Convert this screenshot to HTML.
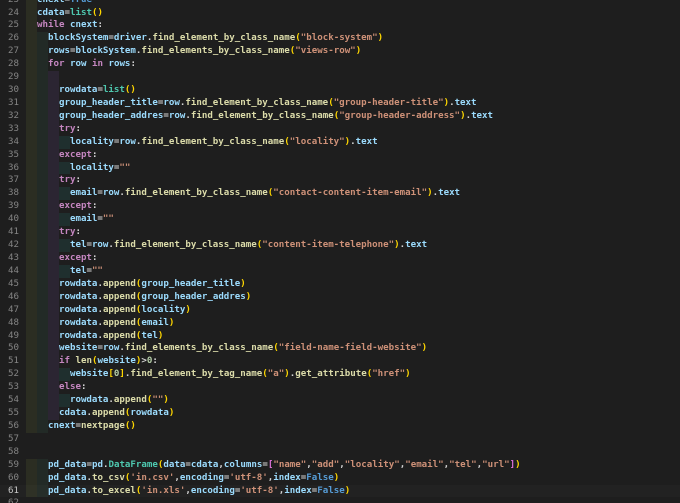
<!DOCTYPE html>
<html><head><meta charset="utf-8"><style>
html,body{margin:0;padding:0;background:#1e1e1e;width:680px;height:503px;overflow:hidden}
#ed{position:relative;width:680px;height:503px;font-family:"DejaVu Sans Mono","Liberation Mono",monospace;font-size:9.15px;font-weight:bold}
.l{position:absolute;left:0;height:12.92px;line-height:12.92px;white-space:pre;width:680px}
.n{position:absolute;left:0;width:19px;text-align:right;color:#858585;font-weight:normal}
.c{position:absolute;left:26px;color:#d4d4d4}
.v{color:#9cdcfe}.f{color:#dcdcaa}.k{color:#c586c0}.s{color:#ce9178}.p{color:#ffd700}.b{color:#da70d6}.q{color:#569cd6}.t{color:#4ec9b0}.m{color:#b5cea8}
.g{position:absolute}
</style></head><body><div id="ed">
<div id="guides"></div>
<div id="lines"></div>
<script>
var L=[
'  <span class="v">cnext</span>=<span class="q">True</span>',
'  <span class="v">cdata</span>=<span class="t">list</span><span class="p">()</span>',
'  <span class="k">while</span> <span class="v">cnext</span>:',
'    <span class="v">blockSystem</span>=<span class="v">driver</span>.<span class="f">find_element_by_class_name</span><span class="p">(</span><span class="s">"block-system"</span><span class="p">)</span>',
'    <span class="v">rows</span>=<span class="v">blockSystem</span>.<span class="f">find_elements_by_class_name</span><span class="p">(</span><span class="s">"views-row"</span><span class="p">)</span>',
'    <span class="k">for</span> <span class="v">row</span> <span class="k">in</span> <span class="v">rows</span>:',
'',
'      <span class="v">rowdata</span>=<span class="t">list</span><span class="p">()</span>',
'      <span class="v">group_header_title</span>=<span class="v">row</span>.<span class="f">find_element_by_class_name</span><span class="p">(</span><span class="s">"group-header-title"</span><span class="p">)</span>.<span class="v">text</span>',
'      <span class="v">group_header_addres</span>=<span class="v">row</span>.<span class="f">find_element_by_class_name</span><span class="p">(</span><span class="s">"group-header-address"</span><span class="p">)</span>.<span class="v">text</span>',
'      <span class="k">try</span>:',
'        <span class="v">locality</span>=<span class="v">row</span>.<span class="f">find_element_by_class_name</span><span class="p">(</span><span class="s">"locality"</span><span class="p">)</span>.<span class="v">text</span>',
'      <span class="k">except</span>:',
'        <span class="v">locality</span>=<span class="s">""</span>',
'      <span class="k">try</span>:',
'        <span class="v">email</span>=<span class="v">row</span>.<span class="f">find_element_by_class_name</span><span class="p">(</span><span class="s">"contact-content-item-email"</span><span class="p">)</span>.<span class="v">text</span>',
'      <span class="k">except</span>:',
'        <span class="v">email</span>=<span class="s">""</span>',
'      <span class="k">try</span>:',
'        <span class="v">tel</span>=<span class="v">row</span>.<span class="f">find_element_by_class_name</span><span class="p">(</span><span class="s">"content-item-telephone"</span><span class="p">)</span>.<span class="v">text</span>',
'      <span class="k">except</span>:',
'        <span class="v">tel</span>=<span class="s">""</span>',
'      <span class="v">rowdata</span>.<span class="f">append</span><span class="p">(</span><span class="v">group_header_title</span><span class="p">)</span>',
'      <span class="v">rowdata</span>.<span class="f">append</span><span class="p">(</span><span class="v">group_header_addres</span><span class="p">)</span>',
'      <span class="v">rowdata</span>.<span class="f">append</span><span class="p">(</span><span class="v">locality</span><span class="p">)</span>',
'      <span class="v">rowdata</span>.<span class="f">append</span><span class="p">(</span><span class="v">email</span><span class="p">)</span>',
'      <span class="v">rowdata</span>.<span class="f">append</span><span class="p">(</span><span class="v">tel</span><span class="p">)</span>',
'      <span class="v">website</span>=<span class="v">row</span>.<span class="f">find_elements_by_class_name</span><span class="p">(</span><span class="s">"field-name-field-website"</span><span class="p">)</span>',
'      <span class="k">if</span> <span class="f">len</span><span class="p">(</span><span class="v">website</span><span class="p">)</span>&gt;<span class="m">0</span>:',
'        <span class="v">website</span><span class="p">[</span><span class="m">0</span><span class="p">]</span>.<span class="f">find_element_by_tag_name</span><span class="p">(</span><span class="s">"a"</span><span class="p">)</span>.<span class="f">get_attribute</span><span class="p">(</span><span class="s">"href"</span><span class="p">)</span>',
'      <span class="k">else</span>:',
'        <span class="v">rowdata</span>.<span class="f">append</span><span class="p">(</span><span class="s">""</span><span class="p">)</span>',
'      <span class="v">cdata</span>.<span class="f">append</span><span class="p">(</span><span class="v">rowdata</span><span class="p">)</span>',
'    <span class="v">cnext</span>=<span class="f">nextpage</span><span class="p">()</span>',
'',
'',
'    <span class="v">pd_data</span>=<span class="v">pd</span>.<span class="t">DataFrame</span><span class="p">(</span><span class="v">data</span>=<span class="v">cdata</span>,<span class="v">columns</span>=<span class="b">[</span><span class="s">"name"</span>,<span class="s">"add"</span>,<span class="s">"locality"</span>,<span class="s">"email"</span>,<span class="s">"tel"</span>,<span class="s">"url"</span><span class="b">]</span><span class="p">)</span>',
'    <span class="v">pd_data</span>.<span class="f">to_csv</span><span class="p">(</span><span class="s">\'in.csv\'</span>,<span class="v">encoding</span>=<span class="s">\'utf-8\'</span>,<span class="v">index</span>=<span class="q">False</span><span class="p">)</span>',
'    <span class="v">pd_data</span>.<span class="f">to_excel</span><span class="p">(</span><span class="s">\'in.xls\'</span>,<span class="v">encoding</span>=<span class="s">\'utf-8\'</span>,<span class="v">index</span>=<span class="q">False</span><span class="p">)</span>',
''
];
function Y(n){return -6.4+(n-23)*12.92;}
var G=[[26,23,56,'#2b2d22'],[26,59,61,'#2b2d22'],[37,26,56,'#222a26'],[48,29,55,'#2b2532'],
[59,34,34,'#1f2f2e'],[59,36,36,'#1f2f2e'],[59,38,38,'#1f2f2e'],[59,40,40,'#1f2f2e'],[59,42,42,'#1f2f2e'],[59,44,44,'#1f2f2e'],[59,52,52,'#1f2f2e'],[59,54,54,'#1f2f2e'],
[37,59,61,'#222a26']];
var g='';
for(var j=0;j<G.length;j++){var a=G[j];var t0=Math.max(0,Y(a[1]));var t1=Y(a[2]+1);
g+='<div class="g" style="left:'+a[0]+'px;top:'+t0.toFixed(2)+'px;width:11px;height:'+(t1-t0).toFixed(2)+'px;background:'+a[3]+'"></div>';}
document.getElementById('guides').innerHTML=g;
var h='';
for(var i=0;i<L.length;i++){var n=23+i;var yy=Y(n).toFixed(2);
h+='<div class="l" style="top:'+yy+'px'+(n==61?';background:rgba(255,255,255,0.02)':'')+'"><span class="n"'+(n==61?' style="color:#c6c6c6"':'')+'>'+n+'</span><span class="c">'+L[i]+'</span></div>';}
document.getElementById('lines').innerHTML=h;
</script>
</div></body></html>
